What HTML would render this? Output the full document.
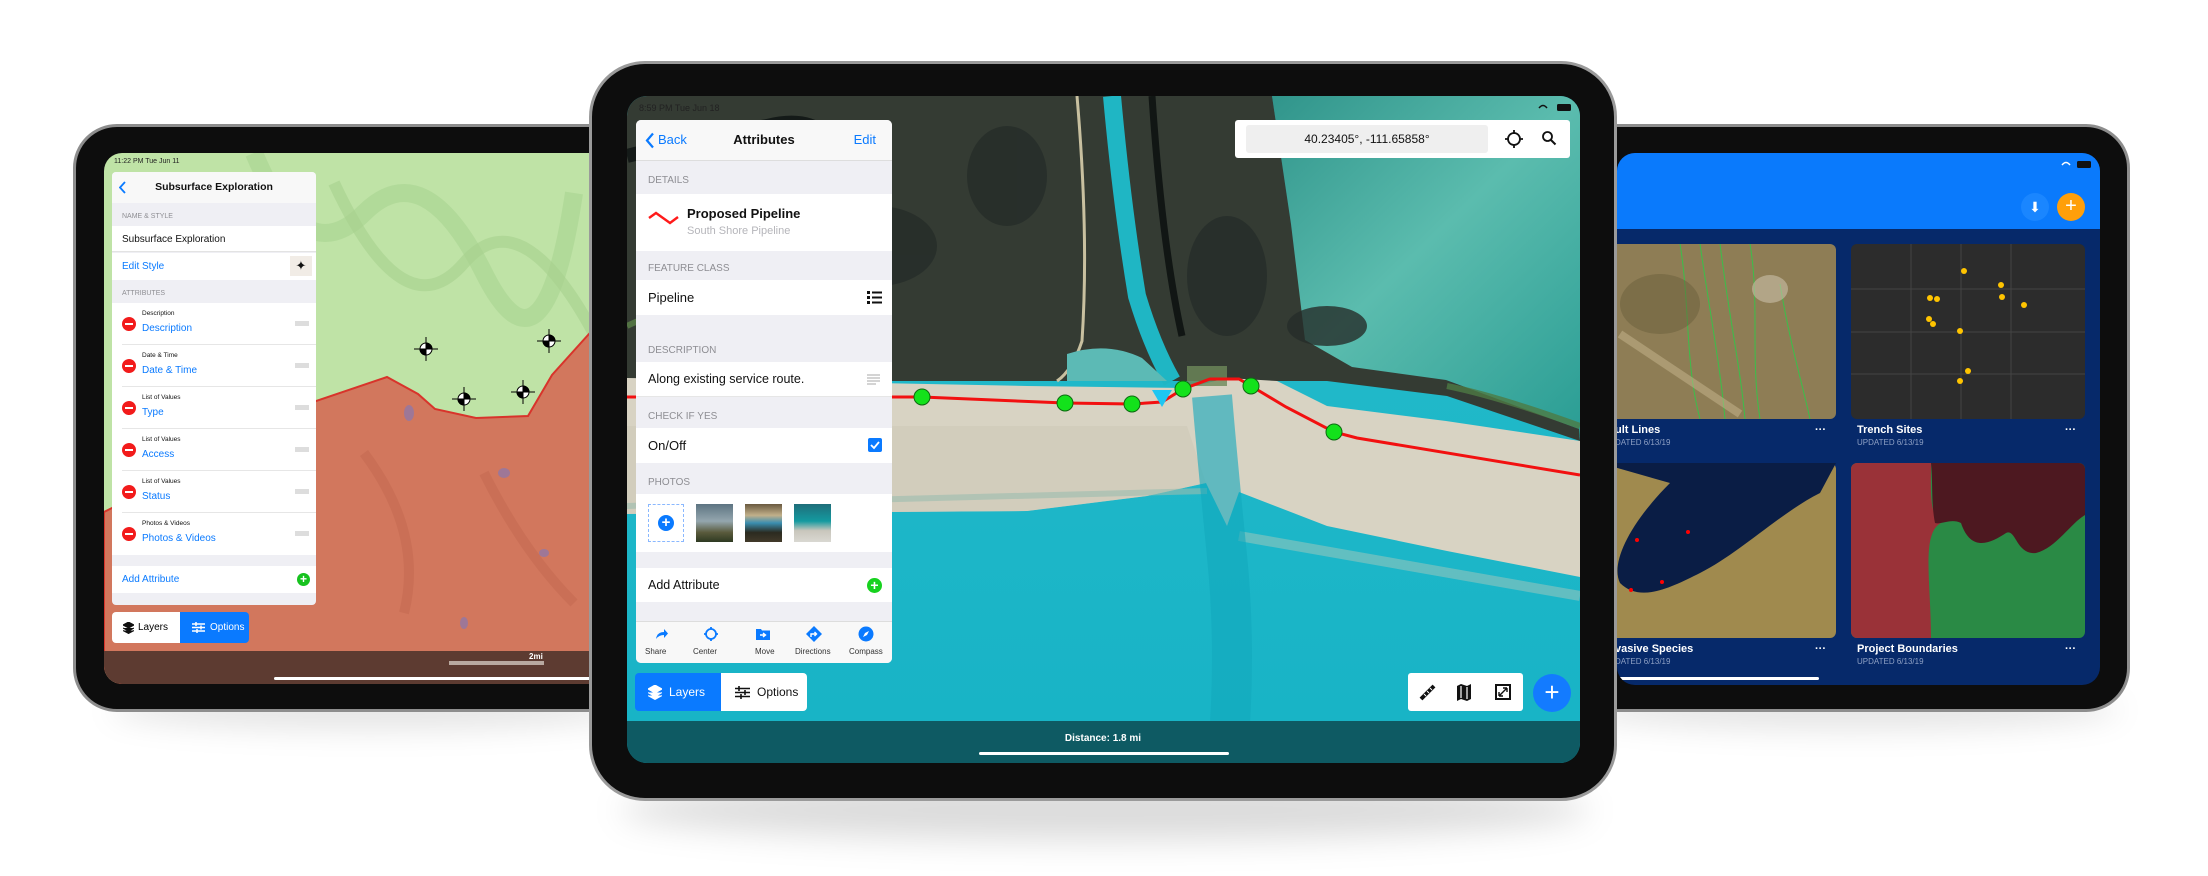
<!DOCTYPE html>
<html><head><meta charset="utf-8">
<style>
*{margin:0;padding:0;box-sizing:border-box}
body{width:2208px;height:876px;background:#fff;position:relative;overflow:hidden;font-family:"Liberation Sans",sans-serif}
.abs{position:absolute}
.dev{position:absolute;background:#0d0d0d;border:3px solid #8d8d8d;}
.scr{position:absolute;overflow:hidden;background:#000}
.lbl{color:#8e8e93;text-transform:uppercase}
.blue{color:#0a7aff}
.row{position:absolute;left:0;right:0;background:#fff}
</style></head><body>

<div class="abs" style="left:110px;top:690px;width:520px;height:40px;border-radius:50%;background:rgba(0,0,0,0.10);filter:blur(14px)"></div>
<div class="abs" style="left:1580px;top:690px;width:540px;height:40px;border-radius:50%;background:rgba(0,0,0,0.10);filter:blur(14px)"></div>
<div class="abs" style="left:620px;top:780px;width:970px;height:60px;border-radius:50%;background:rgba(0,0,0,0.14);filter:blur(16px)"></div>

<!-- LEFT DEVICE -->
<div class="dev" style="left:73px;top:124px;width:600px;height:588px;border-radius:44px"></div>
<div class="scr" style="left:104px;top:153px;width:540px;height:531px;border-radius:18px">
  <svg width="540" height="531" style="position:absolute;left:0;top:0">
    <rect width="540" height="531" fill="#bfe3a6"/>
    <path d="M150 0 Q200 120 260 60 T380 120 T470 40" stroke="#a9d391" stroke-width="18" fill="none" opacity=".6"/>
    <path d="M230 30 Q300 180 360 110 T500 200" stroke="#a6d08d" stroke-width="12" fill="none" opacity=".6"/>
    <polygon points="0,359 8,355 212,248 283,224 314,241 331,256 372,265 424,263 448,222 484,182 523,140 540,120 540,531 0,531" fill="#d2775d" stroke="#d8342b" stroke-width="2"/>
    <path d="M260 300 Q320 380 300 460 M380 320 Q420 400 470 450" stroke="#c56a52" stroke-width="10" fill="none" opacity=".6"/>
    <ellipse cx="305" cy="260" rx="5" ry="8" fill="#8877b0" opacity=".7"/>
    <ellipse cx="400" cy="320" rx="6" ry="5" fill="#8877b0" opacity=".7"/>
    <ellipse cx="440" cy="400" rx="5" ry="4" fill="#8877b0" opacity=".7"/>
    <ellipse cx="360" cy="470" rx="4" ry="6" fill="#8877b0" opacity=".7"/>
    <rect x="0" y="498" width="540" height="33" fill="#5d3b31"/>
    <rect x="345" y="508" width="95" height="4" fill="#b9a9a0"/>
    <text x="425" y="506" font-size="8" fill="#fff" font-weight="bold">2mi</text>
    <rect x="170" y="524" width="340" height="3" rx="1.5" fill="#fff"/>
    <g fill="#000" stroke="#000">
      <g transform="translate(322,196)"><line x1="-12" y1="0" x2="12" y2="0" stroke-width="1"/><line x1="0" y1="-12" x2="0" y2="12" stroke-width="1"/><circle r="6" fill="#fff"/><path d="M0 -6 A6 6 0 0 1 6 0 L0 0Z M0 6 A6 6 0 0 1 -6 0 L0 0Z"/></g>
      <g transform="translate(445,188)"><line x1="-12" y1="0" x2="12" y2="0" stroke-width="1"/><line x1="0" y1="-12" x2="0" y2="12" stroke-width="1"/><circle r="6" fill="#fff"/><path d="M0 -6 A6 6 0 0 1 6 0 L0 0Z M0 6 A6 6 0 0 1 -6 0 L0 0Z"/></g>
      <g transform="translate(360,246)"><line x1="-12" y1="0" x2="12" y2="0" stroke-width="1"/><line x1="0" y1="-12" x2="0" y2="12" stroke-width="1"/><circle r="6" fill="#fff"/><path d="M0 -6 A6 6 0 0 1 6 0 L0 0Z M0 6 A6 6 0 0 1 -6 0 L0 0Z"/></g>
      <g transform="translate(419,239)"><line x1="-12" y1="0" x2="12" y2="0" stroke-width="1"/><line x1="0" y1="-12" x2="0" y2="12" stroke-width="1"/><circle r="6" fill="#fff"/><path d="M0 -6 A6 6 0 0 1 6 0 L0 0Z M0 6 A6 6 0 0 1 -6 0 L0 0Z"/></g>
    </g>
    <text x="10" y="10" font-size="7" fill="#222">11:22 PM   Tue Jun 11</text>
  </svg>
  <div class="abs" style="left:8px;top:19px;width:204px;height:433px;background:#efeff4;border-radius:4px;overflow:hidden;font-size:10px;color:#111">
    <div class="row" style="top:0;height:31px;background:#f8f8f8">
      <svg class="abs" style="left:7px;top:9px" width="8" height="13"><path d="M6 1 L1 6.5 L6 12" stroke="#0a7aff" stroke-width="1.8" fill="none"/></svg>
      <div class="abs" style="left:0;right:0;top:9px;text-align:center;font-weight:bold;font-size:10.5px">Subsurface Exploration</div>
    </div>
    <div class="abs lbl" style="left:10px;top:41px;font-size:7px">Name &amp; Style</div>
    <div class="row" style="top:54px;height:26px;border-bottom:1px solid #e3e3e3"><span class="abs" style="left:10px;top:8px">Subsurface Exploration</span></div>
    <div class="row" style="top:81px;height:27px"><span class="abs blue" style="left:10px;top:8px">Edit Style</span><div class="abs" style="right:4px;top:3px;width:22px;height:20px;background:#f1ece6;text-align:center;font-size:13px;line-height:20px">✦</div></div>
    <div class="abs lbl" style="left:10px;top:118px;font-size:7px">Attributes</div>
    <div class="row" style="top:131px;height:252px"></div>
    <div class="abs" style="left:0;top:131px;width:204px">
      <div style="position:relative;height:42px;border-bottom:1px solid #e6e6e6;margin-left:10px"><div class="abs" style="left:0;top:14px;width:14px;height:14px;border-radius:50%;background:#f21b1b"><div style="margin:6px 3px;height:2px;background:#fff"></div></div><div class="abs" style="left:20px;top:7px;font-size:6.5px">Description</div><div class="abs blue" style="left:20px;top:20px;font-size:10px">Description</div><div class="abs" style="right:7px;top:18px;width:14px;height:5px;background:#ddd"></div></div>
      <div style="position:relative;height:42px;border-bottom:1px solid #e6e6e6;margin-left:10px"><div class="abs" style="left:0;top:14px;width:14px;height:14px;border-radius:50%;background:#f21b1b"><div style="margin:6px 3px;height:2px;background:#fff"></div></div><div class="abs" style="left:20px;top:7px;font-size:6.5px">Date &amp; Time</div><div class="abs blue" style="left:20px;top:20px;font-size:10px">Date &amp; Time</div><div class="abs" style="right:7px;top:18px;width:14px;height:5px;background:#ddd"></div></div>
      <div style="position:relative;height:42px;border-bottom:1px solid #e6e6e6;margin-left:10px"><div class="abs" style="left:0;top:14px;width:14px;height:14px;border-radius:50%;background:#f21b1b"><div style="margin:6px 3px;height:2px;background:#fff"></div></div><div class="abs" style="left:20px;top:7px;font-size:6.5px">List of Values</div><div class="abs blue" style="left:20px;top:20px;font-size:10px">Type</div><div class="abs" style="right:7px;top:18px;width:14px;height:5px;background:#ddd"></div></div>
      <div style="position:relative;height:42px;border-bottom:1px solid #e6e6e6;margin-left:10px"><div class="abs" style="left:0;top:14px;width:14px;height:14px;border-radius:50%;background:#f21b1b"><div style="margin:6px 3px;height:2px;background:#fff"></div></div><div class="abs" style="left:20px;top:7px;font-size:6.5px">List of Values</div><div class="abs blue" style="left:20px;top:20px;font-size:10px">Access</div><div class="abs" style="right:7px;top:18px;width:14px;height:5px;background:#ddd"></div></div>
      <div style="position:relative;height:42px;border-bottom:1px solid #e6e6e6;margin-left:10px"><div class="abs" style="left:0;top:14px;width:14px;height:14px;border-radius:50%;background:#f21b1b"><div style="margin:6px 3px;height:2px;background:#fff"></div></div><div class="abs" style="left:20px;top:7px;font-size:6.5px">List of Values</div><div class="abs blue" style="left:20px;top:20px;font-size:10px">Status</div><div class="abs" style="right:7px;top:18px;width:14px;height:5px;background:#ddd"></div></div>
      <div style="position:relative;height:42px;margin-left:10px"><div class="abs" style="left:0;top:14px;width:14px;height:14px;border-radius:50%;background:#f21b1b"><div style="margin:6px 3px;height:2px;background:#fff"></div></div><div class="abs" style="left:20px;top:7px;font-size:6.5px">Photos &amp; Videos</div><div class="abs blue" style="left:20px;top:20px;font-size:10px">Photos &amp; Videos</div><div class="abs" style="right:7px;top:18px;width:14px;height:5px;background:#ddd"></div></div>
    </div>
    <div class="row" style="top:394px;height:27px"><span class="abs blue" style="left:10px;top:8px">Add Attribute</span><div class="abs" style="right:6px;top:7px;width:13px;height:13px;border-radius:50%;background:#17c21f;color:#fff;font-size:12px;line-height:13px;text-align:center;font-weight:bold">+</div></div>
  </div>
  <div class="abs" style="left:8px;top:459px;width:68px;height:31px;background:#fff;border-radius:4px 0 0 4px;font-size:10px;line-height:31px;padding-left:26px">Layers<svg class="abs" style="left:11px;top:10px" width="11" height="12"><path d="M5.5 0 L11 3 L5.5 6 L0 3Z M0 6 L5.5 9 L11 6 M0 8.5 L5.5 11.5 L11 8.5" fill="#111" stroke="#111"/></svg></div>
  <div class="abs" style="left:76px;top:459px;width:69px;height:31px;background:#0a7aff;border-radius:0 4px 4px 0;font-size:10px;line-height:31px;color:#fff;padding-left:30px">Options<svg class="abs" style="left:12px;top:10px" width="13" height="11" stroke="#fff" stroke-width="1.5"><path d="M0 2H13M0 5.5H13M0 9H13M4 0V4M9 3.5V7.5M5 7V11"/></svg></div>
</div>

<!-- RIGHT DEVICE -->
<div class="dev" style="left:1540px;top:124px;width:590px;height:588px;border-radius:44px"></div>
<div class="scr" style="left:1617px;top:153px;width:483px;height:532px;border-radius:18px;background:#06296a">
  <div class="abs" style="left:0;top:0;width:483px;height:76px;background:#0a7afc"></div>
  <svg class="abs" style="left:443px;top:6px" width="36" height="10"><path d="M2 6 Q6 1 10 6" stroke="#fff" fill="none" stroke-width="1.5"/><rect x="17" y="2" width="14" height="7" rx="1.5" fill="#111"/></svg>
  <div class="abs" style="left:404px;top:40px;width:28px;height:28px;border-radius:50%;background:#1a86ff;color:#fff;text-align:center;font-size:14px;line-height:28px">⬇</div>
  <div class="abs" style="left:440px;top:40px;width:28px;height:28px;border-radius:50%;background:#ff9f0a;color:#fff;text-align:center;font-size:20px;line-height:27px">+</div>
  <svg class="abs" style="left:-17px;top:91px" width="236" height="175"><rect width="236" height="175" rx="6" fill="#8e7d55"/><path d="M80 0 C90 60 85 120 100 175 M100 0 C110 70 120 120 125 175 M120 0 C130 80 140 120 145 175 M150 0 C160 60 150 110 160 175 M180 40 C190 100 200 130 210 175" stroke="#3bbf4a" stroke-width="1" fill="none"/><ellipse cx="170" cy="45" rx="18" ry="14" fill="#c9c0a8" opacity=".6"/><path d="M20 90 L140 170" stroke="#c8b890" stroke-width="8" opacity=".5"/><ellipse cx="60" cy="60" rx="40" ry="30" fill="#6a5f3c" opacity=".5"/></svg>
  <svg class="abs" style="left:234px;top:91px" width="234" height="175"><rect width="234" height="175" rx="6" fill="#2c2c2c"/><g stroke="#444" stroke-width="1"><path d="M0 88H234M0 45H234M0 130H234M60 0V175M110 0V175M160 0V175"/></g><g fill="#ffc400"><circle cx="113" cy="27" r="3"/><circle cx="150" cy="41" r="3"/><circle cx="79" cy="54" r="3"/><circle cx="86" cy="55" r="3"/><circle cx="151" cy="53" r="3"/><circle cx="173" cy="61" r="3"/><circle cx="78" cy="75" r="3"/><circle cx="82" cy="80" r="3"/><circle cx="109" cy="87" r="3"/><circle cx="117" cy="127" r="3"/><circle cx="109" cy="137" r="3"/></g></svg>
  <svg class="abs" style="left:-17px;top:310px" width="236" height="175"><rect width="236" height="175" rx="6" fill="#a08a4e"/><path d="M0 0 H236 L220 30 C180 50 140 90 100 110 C70 125 40 140 20 120 C10 100 30 60 70 20 Z" fill="#0a1d45"/><circle cx="37" cy="77" r="2" fill="red"/><circle cx="88" cy="69" r="2" fill="red"/><circle cx="62" cy="119" r="2" fill="red"/><circle cx="31" cy="127" r="2" fill="red"/></svg>
  <svg class="abs" style="left:234px;top:310px" width="234" height="175"><rect width="234" height="175" rx="6" fill="#2a8a45"/><path d="M6 0 H80 C80 30 78 50 90 60 C70 70 80 120 80 175 H6 A6 6 0 0 1 0 169 V6 A6 6 0 0 1 6 0Z" fill="#9a3238"/><path d="M80 0 H228 A6 6 0 0 1 234 6 V52 C220 60 205 85 185 90 C165 92 165 65 155 70 C140 80 120 90 110 60 C100 55 90 62 84 60 C80 40 82 20 80 0Z" fill="#4d1820"/></svg>
  <div class="abs" style="left:-2px;top:271px;font-size:11px;font-weight:bold;color:#fff;white-space:nowrap">ult Lines</div>
  <div class="abs" style="left:-2px;top:285px;font-size:8px;color:#8ea0c4;white-space:nowrap">DATED 6/13/19</div>
  <div class="abs" style="left:198px;top:271px;font-size:11px;color:#fff;font-weight:bold">···</div>
  <div class="abs" style="left:240px;top:271px;font-size:11px;font-weight:bold;color:#fff">Trench Sites</div>
  <div class="abs" style="left:240px;top:285px;font-size:8px;color:#8ea0c4">UPDATED 6/13/19</div>
  <div class="abs" style="left:448px;top:271px;font-size:11px;color:#fff;font-weight:bold">···</div>
  <div class="abs" style="left:-2px;top:490px;font-size:11px;font-weight:bold;color:#fff;white-space:nowrap">vasive Species</div>
  <div class="abs" style="left:-2px;top:504px;font-size:8px;color:#8ea0c4;white-space:nowrap">DATED 6/13/19</div>
  <div class="abs" style="left:198px;top:490px;font-size:11px;color:#fff;font-weight:bold">···</div>
  <div class="abs" style="left:240px;top:490px;font-size:11px;font-weight:bold;color:#fff">Project Boundaries</div>
  <div class="abs" style="left:240px;top:504px;font-size:8px;color:#8ea0c4">UPDATED 6/13/19</div>
  <div class="abs" style="left:448px;top:490px;font-size:11px;color:#fff;font-weight:bold">···</div>
  <div class="abs" style="left:0;top:524px;width:202px;height:3px;border-radius:2px;background:#fff"></div>
</div>

<!-- CENTER DEVICE -->
<div class="dev" style="left:589px;top:61px;width:1028px;height:740px;border-radius:56px;border-color:#9a9a9a"></div>
<div class="scr" style="left:627px;top:96px;width:953px;height:667px;border-radius:20px">
  <svg width="953" height="667" style="position:absolute;left:0;top:0">
    <defs>
      <linearGradient id="sea" x1="0" y1="0" x2="1" y2="1"><stop offset="0" stop-color="#2a8f86"/><stop offset=".5" stop-color="#5bbcae"/><stop offset="1" stop-color="#2a9d94"/></linearGradient>
      <linearGradient id="wat" x1="0" y1="0" x2="0" y2="1"><stop offset="0" stop-color="#27bccb"/><stop offset="1" stop-color="#17b3c6"/></linearGradient>
    </defs>
    <rect width="953" height="667" fill="url(#wat)"/>
    <polygon points="600,0 953,0 953,340 819,290 725,275 678,250 664,128 645,0" fill="url(#sea)"/>
    <polygon points="0,0 645,0 664,128 678,244 725,271 819,284 952,333 953,345 820,300 700,285 560,285 0,285" fill="#343b33"/>
    <g fill="#262d29" opacity=".8">
      <ellipse cx="250" cy="150" rx="60" ry="40"/><ellipse cx="380" cy="80" rx="40" ry="50"/><ellipse cx="600" cy="180" rx="40" ry="60"/><ellipse cx="150" cy="220" rx="50" ry="25"/><ellipse cx="700" cy="230" rx="40" ry="20"/>
    </g>
    <path d="M0 60 Q80 40 140 30 Q180 20 200 40 M30 110 Q100 120 160 100" stroke="#141a18" stroke-width="14" fill="none"/>
    <ellipse cx="80" cy="110" rx="12" ry="25" fill="#8aa06a" transform="rotate(20 80 110)"/>
    <path d="M0 230 Q60 200 120 240 Q160 270 200 260" stroke="#5f8a4a" stroke-width="6" fill="none" opacity=".7"/>
    <path d="M820 290 Q870 300 953 330" stroke="#4d7a44" stroke-width="6" fill="none" opacity=".8"/>
    <!-- channel -->
    <path d="M485 0 Q495 110 510 200 Q525 250 545 285" stroke="#1fb6c4" stroke-width="18" fill="none"/>
    <path d="M450 0 Q462 140 455 245 Q445 275 430 285" stroke="#c8c0a0" stroke-width="3" fill="none"/>
    <path d="M525 0 Q535 150 555 240" stroke="#111614" stroke-width="7" fill="none"/>
    <path d="M440 258 Q480 245 515 262 L540 285 L440 285Z" fill="#5cbab5"/>
    <!-- beach -->
    <polygon points="0,282 400,290 560,292 600,282 650,285 700,310 819,325 953,345 953,481 820,455 700,430 612,396 600,430 579,387 520,400 400,415 0,418" fill="#d8d3c3"/>
    <polygon points="0,330 560,330 579,387 520,400 400,415 0,418" fill="#cfcab8" opacity=".6"/>
    <path d="M0 410 L580 395" stroke="#9cbdb0" stroke-width="6" opacity=".6"/>
    <path d="M612 440 L953 500" stroke="#a8c8bc" stroke-width="10" opacity=".5"/>
    <ellipse cx="60" cy="335" rx="10" ry="8" fill="#6b7a55"/><ellipse cx="80" cy="335" rx="8" ry="9" fill="#6b7a55"/><ellipse cx="110" cy="333" rx="8" ry="8" fill="#6b7a55"/>
    <path d="M585 300 Q590 360 600 460 Q610 560 600 667" stroke="#12a8bd" stroke-width="40" fill="none" opacity=".6"/>
    <rect x="560" y="270" width="40" height="20" fill="#6e8a5a" opacity=".8"/>
    <polyline points="0,301 295,301 438,307 505,308 535,306 556,293 583,283 612,283 624,290 659,311 707,336 730,342 953,379" stroke="#f21010" stroke-width="3" fill="none"/>
    <g fill="#13e21b" stroke="#0c6a10" stroke-width="1"><circle cx="295" cy="301" r="8"/><circle cx="438" cy="307" r="8"/><circle cx="505" cy="308" r="8"/><circle cx="556" cy="293" r="8"/><circle cx="624" cy="290" r="8"/><circle cx="707" cy="336" r="8"/></g>
    <polygon points="525,294 545,294 535,311" fill="#1ec6f2"/>
    <rect x="0" y="625" width="953" height="42" fill="#0e5a63"/>
    <text x="476" y="645" font-size="10" fill="#fff" text-anchor="middle" font-weight="bold" font-family="Liberation Sans">Distance: 1.8 mi</text>
    <rect x="352" y="656" width="250" height="3" rx="1.5" fill="#fff"/>
    <text x="12" y="15" font-size="9" fill="#222" font-family="Liberation Sans">8:59 PM   Tue Jun 18</text>
    <path d="M912 12 Q916 7 920 12" stroke="#111" stroke-width="1.5" fill="none"/><rect x="930" y="8" width="14" height="7" rx="1.5" fill="#111"/>
  </svg>

  <div class="abs" style="left:608px;top:24px;width:335px;height:38px;background:#fff;border-radius:3px">
    <div class="abs" style="left:11px;top:5px;width:242px;height:28px;background:#efefef;border-radius:3px;text-align:center;font-size:12px;line-height:28px;color:#111">40.23405°, -111.65858°</div>
    <svg class="abs" style="left:269px;top:9px" width="20" height="20"><circle cx="10" cy="10" r="6" stroke="#111" stroke-width="1.8" fill="none"/><path d="M10 1V5M10 15V19M1 10H5M15 10H19" stroke="#111" stroke-width="1.8"/></svg>
    <svg class="abs" style="left:306px;top:10px" width="16" height="16"><circle cx="6.5" cy="6.5" r="4.5" stroke="#111" stroke-width="1.8" fill="none"/><path d="M10 10L14.5 14.5" stroke="#111" stroke-width="2"/></svg>
  </div>

  <div class="abs" style="left:9px;top:24px;width:256px;height:543px;background:#efeff4;border-radius:5px;overflow:hidden;color:#111;font-size:14px">
    <div class="row" style="top:0;height:41px;background:#f8f8f8;border-bottom:1px solid #ddd">
      <svg class="abs" style="left:9px;top:12px" width="10" height="17"><path d="M8 1.5L2 8.5L8 15.5" stroke="#0a7aff" stroke-width="2.2" fill="none"/></svg>
      <span class="abs blue" style="left:22px;top:12px;font-size:13px">Back</span>
      <span class="abs" style="left:0;right:0;top:12px;text-align:center;font-weight:bold;font-size:13px">Attributes</span>
      <span class="abs blue" style="right:16px;top:12px;font-size:13px">Edit</span>
    </div>
    <div class="abs lbl" style="left:12px;top:55px;font-size:10px">Details</div>
    <div class="row" style="top:74px;height:57px">
      <svg class="abs" style="left:12px;top:16px" width="32" height="16"><path d="M1 8L8 3L22 13L30 7" stroke="#ff1a1a" stroke-width="2.4" fill="none"/></svg>
      <span class="abs" style="left:51px;top:12px;font-weight:bold;font-size:13px">Proposed Pipeline</span>
      <span class="abs" style="left:51px;top:31px;font-size:11px;color:#b5b5ba">South Shore Pipeline</span>
    </div>
    <div class="abs lbl" style="left:12px;top:143px;font-size:10px">Feature Class</div>
    <div class="row" style="top:160px;height:35px"><span class="abs" style="left:12px;top:10px;font-size:13px">Pipeline</span>
      <svg class="abs" style="right:10px;top:11px" width="15" height="13" fill="#111"><rect x="0" y="0" width="3" height="3"/><rect x="5" y="0.5" width="10" height="2"/><rect x="0" y="5" width="3" height="3"/><rect x="5" y="5.5" width="10" height="2"/><rect x="0" y="10" width="3" height="3"/><rect x="5" y="10.5" width="10" height="2"/></svg></div>
    <div class="abs lbl" style="left:12px;top:225px;font-size:10px">Description</div>
    <div class="row" style="top:242px;height:35px;border-bottom:1px solid #e6e6e6"><span class="abs" style="left:12px;top:10px;font-size:12.5px">Along existing service route.</span>
      <svg class="abs" style="right:12px;top:12px" width="13" height="11" stroke="#aaa" stroke-width="1"><path d="M0 1H13M0 4H13M0 7H13M0 10H9"/></svg></div>
    <div class="abs lbl" style="left:12px;top:291px;font-size:10px">Check if yes</div>
    <div class="row" style="top:308px;height:35px"><span class="abs" style="left:12px;top:10px;font-size:13px">On/Off</span>
      <div class="abs" style="right:10px;top:10px;width:14px;height:14px;background:#0a7aff;border-radius:2px"><svg width="14" height="14"><path d="M3 7L6 10L11 4" stroke="#fff" stroke-width="1.8" fill="none"/></svg></div></div>
    <div class="abs lbl" style="left:12px;top:357px;font-size:10px">Photos</div>
    <div class="row" style="top:374px;height:58px">
      <div class="abs" style="left:12px;top:10px;width:36px;height:38px;border:1px dashed #8ab8ff"><div style="margin:10px auto;width:16px;height:16px;border-radius:50%;background:#0a7aff;color:#fff;font-size:15px;line-height:15px;text-align:center;font-weight:bold">+</div></div>
      <div class="abs" style="left:60px;top:10px;width:37px;height:38px;background:linear-gradient(#5d7482 0%,#94a6ae 45%,#5a5a3c 75%,#2e3a22 100%)"></div>
      <div class="abs" style="left:109px;top:10px;width:37px;height:38px;background:linear-gradient(#6a5a40 0%,#c2b08a 30%,#3a8eb0 50%,#2b2a20 75%,#423a2a 100%)"></div>
      <div class="abs" style="left:158px;top:10px;width:37px;height:38px;background:linear-gradient(#1f6e7a 0%,#149aa0 45%,#c9c6bc 70%,#d9d8d2 100%)"></div>
    </div>
    <div class="row" style="top:448px;height:34px"><span class="abs" style="left:12px;top:10px;font-size:12.5px">Add Attribute</span>
      <div class="abs" style="right:10px;top:10px;width:15px;height:15px;border-radius:50%;background:#17d21f;color:#fff;font-size:14px;line-height:15px;text-align:center;font-weight:bold">+</div></div>
    <div class="row" style="top:501px;height:42px;background:#f8f8f8;border-top:1px solid #ddd;font-size:8px;color:#333">
      <svg class="abs" style="left:19px;top:6px" width="14" height="12"><path d="M1 11 Q2 4 9 4 V1 L13 5.5 L9 10 V7 Q4 7 1 11Z" fill="#0a7aff"/></svg>
      <svg class="abs" style="left:67px;top:4px" width="16" height="16"><circle cx="8" cy="8" r="5" stroke="#0a7aff" stroke-width="1.8" fill="none"/><path d="M8 1V3M8 13V15M1 8H3M13 8H15" stroke="#0a7aff" stroke-width="1.8"/></svg>
      <svg class="abs" style="left:120px;top:6px" width="14" height="12"><path d="M0 1H5L6 2.5H14V12H0Z" fill="#0a7aff"/><path d="M4 7H9M7 5L9.5 7L7 9" stroke="#fff" stroke-width="1.4" fill="none"/></svg>
      <svg class="abs" style="left:170px;top:4px" width="16" height="16"><path d="M8 0L16 8L8 16L0 8Z" fill="#0a7aff"/><path d="M5 11V8H10M8.5 6L10.5 8L8.5 10" stroke="#fff" stroke-width="1.4" fill="none"/></svg>
      <svg class="abs" style="left:222px;top:4px" width="16" height="16"><circle cx="8" cy="8" r="7.5" fill="#0a7aff"/><path d="M11 5L7 7L5 11L9 9Z" fill="#fff"/></svg>
      <span class="abs" style="left:9px;top:25px">Share</span><span class="abs" style="left:57px;top:25px">Center</span><span class="abs" style="left:119px;top:25px">Move</span><span class="abs" style="left:159px;top:25px">Directions</span><span class="abs" style="left:213px;top:25px">Compass</span>
    </div>
  </div>

  <div class="abs" style="left:8px;top:577px;width:86px;height:38px;background:#0a7aff;border-radius:4px 0 0 4px;color:#fff;font-size:12px;line-height:38px;padding-left:34px">Layers<svg class="abs" style="left:13px;top:12px" width="14" height="15"><path d="M7 0L14 4L7 8L0 4Z M0 7.5L7 11.5L14 7.5 M0 10.5L7 14.5L14 10.5" fill="#fff" stroke="#fff"/></svg></div>
  <div class="abs" style="left:94px;top:577px;width:86px;height:38px;background:#fff;border-radius:0 4px 4px 0;color:#111;font-size:12px;line-height:38px;padding-left:36px">Options<svg class="abs" style="left:14px;top:13px" width="15" height="13" stroke="#111" stroke-width="1.6"><path d="M0 2.5H15M0 6.5H15M0 10.5H15M4 0V5M10 4V9M6 8V13"/></svg></div>

  <div class="abs" style="left:781px;top:577px;width:115px;height:38px;background:#fff;border-radius:3px">
    <svg class="abs" style="left:11px;top:11px" width="17" height="17"><path d="M2 15L15 2" stroke="#111" stroke-width="4"/><path d="M5 10L7 12M8 7L10 9M11 4L13 6" stroke="#fff" stroke-width="1"/></svg>
    <svg class="abs" style="left:49px;top:11px" width="14" height="17"><path d="M0 2L4 0L10 2L14 0V15L10 17L4 15L0 17Z" fill="#111"/><path d="M4 2V14M10 3V15" stroke="#fff" stroke-width="1.2"/></svg>
    <svg class="abs" style="left:87px;top:11px" width="16" height="16"><rect x="1" y="1" width="14" height="14" stroke="#111" stroke-width="2" fill="none"/><path d="M4 12V8M4 12H8M12 4V8M12 4H8M4 12L12 4" stroke="#111" stroke-width="1.4"/></svg>
  </div>
  <div class="abs" style="left:906px;top:578px;width:38px;height:38px;border-radius:50%;background:#137bff;color:#fff;font-size:26px;line-height:36px;text-align:center">+</div>
</div>
</body></html>
